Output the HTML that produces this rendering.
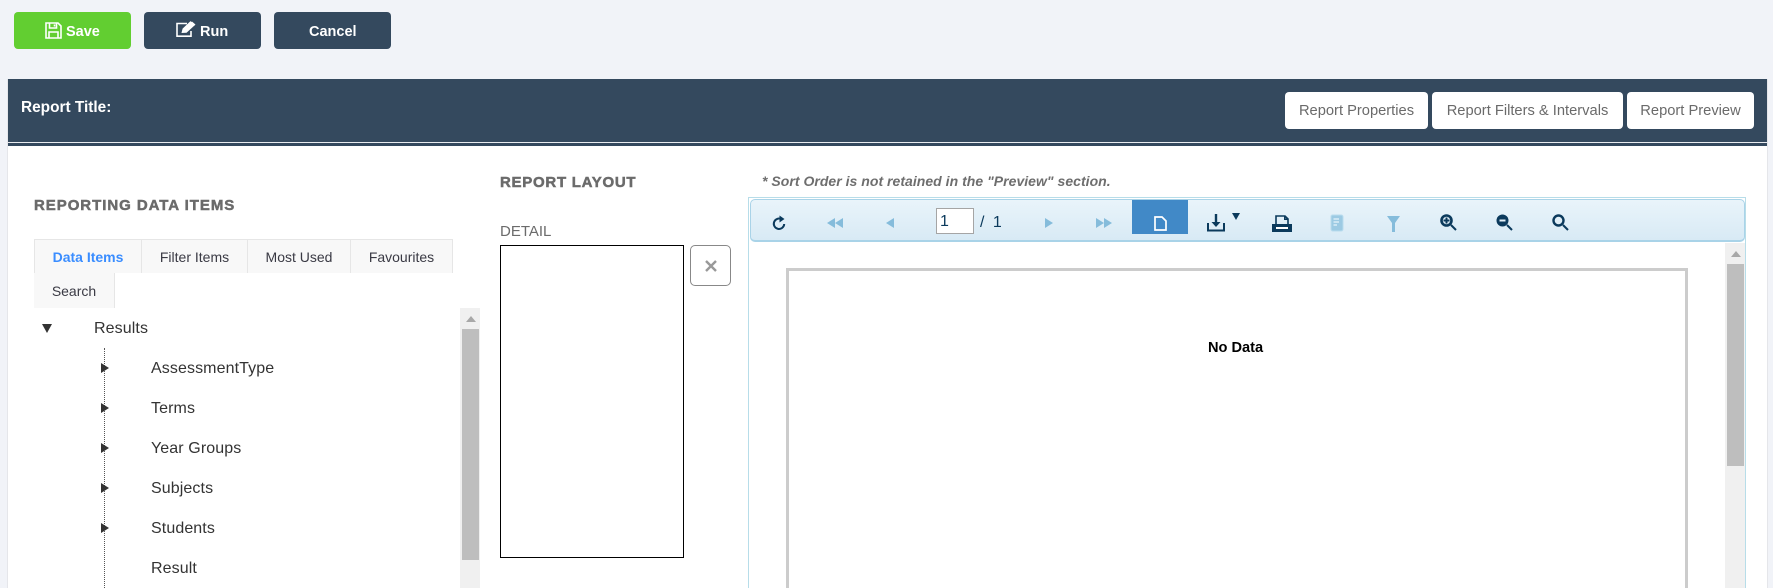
<!DOCTYPE html>
<html><head><meta charset="utf-8"><style>
html,body{margin:0;padding:0;width:1773px;height:588px;overflow:hidden;background:#f1f3f8;font-family:"Liberation Sans",sans-serif}
.a,.t{position:absolute}
.t{white-space:nowrap;line-height:20px}
.btn{position:absolute;top:12px;width:117px;height:37px;border-radius:4px;background:#34495e}
.w{color:#fff;font-weight:bold;font-size:14px}
.hb{position:absolute;top:92px;height:37px;background:#fff;border-radius:4px;color:#6a6a6a;font-size:14.7px;line-height:39px;text-align:center}
.tab{position:absolute;box-sizing:border-box;background:#f8f8f8;border:1px solid #e6e6e6;border-bottom:0;border-left:0;font-size:14px;line-height:34px;text-align:center;color:#3a3a44}
.tr{font-size:16px;color:#333;left:151px;letter-spacing:.1px}
.tri{position:absolute;left:101px;width:0;height:0;border-left:8px solid #333;border-top:5px solid transparent;border-bottom:5px solid transparent}
svg{position:absolute;overflow:visible}
</style></head><body>
<div class="btn" style="left:14px;background:#62ce31"></div>
<svg style="left:45px;top:22px" width="17" height="17" viewBox="0 0 17 17" fill="none" stroke="#fff" stroke-width="1.6"><path d="M1 1H13L16 4V16H1Z"/><path d="M4.5 1V6H11.5V1M9.5 2.5V4.5M4 16V10H13V16"/></svg>
<div class="t w" style="left:66px;top:22px;font-size:14.5px">Save</div>
<div class="btn" style="left:144px"></div>
<svg style="left:176px;top:21px" width="20" height="17" viewBox="0 0 20 17" fill="none" stroke="#fff" stroke-width="1.6"><path d="M15 10V15.2H1V2.5H11"/><path d="M6.5 11.2L7.3 8L14.5 1.2L17.8 4L10.2 11Z" fill="#fff"/><path d="M15.5 1L19 4" stroke-width="1.4"/></svg>
<div class="t w" style="left:200px;top:22px;font-size:14.5px">Run</div>
<div class="btn" style="left:274px"></div>
<div class="t w" style="left:309px;top:22px;font-size:14.5px">Cancel</div>

<div class="a" style="left:7px;top:79px;width:1761px;height:509px;background:#fff;border-left:1px solid #e5e6ea;border-right:1px solid #e5e6ea;box-sizing:border-box"></div>
<div class="a" style="left:8px;top:79px;width:1759px;height:63px;background:#34495e"></div>
<div class="a" style="left:8px;top:142px;width:1759px;height:1px;background:#e8ebef"></div>
<div class="a" style="left:8px;top:143px;width:1759px;height:3px;background:#34495e"></div>
<div class="t w" style="left:21px;top:98px;font-size:15.4px">Report Title:</div>
<div class="hb" style="left:1285px;width:143px">Report Properties</div>
<div class="hb" style="left:1432px;width:191px">Report Filters &amp; Intervals</div>
<div class="hb" style="left:1627px;width:127px">Report Preview</div>

<div class="t" style="left:34px;top:196px;font-size:15px;font-weight:bold;color:#6b6b6b;letter-spacing:.95px;-webkit-text-stroke:.5px #6b6b6b">REPORTING DATA ITEMS</div>
<div class="tab" style="left:34px;top:239px;width:108px;height:34px;border-left:1px solid #e6e6e6;color:#3a8dff;font-weight:bold">Data Items</div>
<div class="tab" style="left:142px;top:239px;width:106px;height:34px">Filter Items</div>
<div class="tab" style="left:248px;top:239px;width:103px;height:34px">Most Used</div>
<div class="tab" style="left:351px;top:239px;width:102px;height:34px">Favourites</div>
<div class="tab" style="left:34px;top:273px;width:81px;height:35px;border-top:0;line-height:36px">Search</div>

<div class="a" style="left:460px;top:308px;width:20px;height:280px;background:#f0f0f0"></div>
<div class="a" style="left:462px;top:329px;width:17px;height:231px;background:#bebebe"></div>
<div class="a" style="left:466px;top:316px;width:0;height:0;border-left:5px solid transparent;border-right:5px solid transparent;border-bottom:6px solid #a8a8a8"></div>

<div class="a" style="left:42px;top:324px;width:0;height:0;border-left:5px solid transparent;border-right:5px solid transparent;border-top:9px solid #333"></div>
<div class="t" style="left:94px;top:319px;font-size:16px;color:#333;letter-spacing:.1px">Results</div>
<div class="a" style="left:104px;top:348px;width:0;height:240px;border-left:1px dotted #555"></div>
<div class="tri" style="top:363px"></div><div class="tri" style="top:403px"></div><div class="tri" style="top:443px"></div><div class="tri" style="top:483px"></div><div class="tri" style="top:523px"></div>
<div class="t tr" style="top:359px">AssessmentType</div>
<div class="t tr" style="top:399px">Terms</div>
<div class="t tr" style="top:439px">Year Groups</div>
<div class="t tr" style="top:479px">Subjects</div>
<div class="t tr" style="top:519px">Students</div>
<div class="t tr" style="top:559px">Result</div>

<div class="t" style="left:500px;top:173px;font-size:15px;font-weight:bold;color:#6b6b6b;letter-spacing:.72px;-webkit-text-stroke:.5px #6b6b6b">REPORT LAYOUT</div>
<div class="t" style="left:500px;top:222px;font-size:15px;color:#6b6b6b">DETAIL</div>
<div class="a" style="left:500px;top:245px;width:184px;height:313px;border:1px solid #000;box-sizing:border-box"></div>
<div class="a" style="left:690px;top:245px;width:41px;height:41px;border:1px solid #888;border-radius:5px;box-sizing:border-box"></div>
<svg style="left:705px;top:260px" width="12" height="12" viewBox="0 0 12 12"><path d="M1 1L11 11M11 1L1 11" stroke="#999" stroke-width="2.4"/></svg>
<div class="t" style="left:762px;top:171px;font-size:14px;font-style:italic;font-weight:bold;color:#6e6e6e;letter-spacing:.03px">* Sort Order is not retained in the "Preview" section.</div>

<div class="a" style="left:748px;top:197px;width:998px;height:391px;border:1px solid #b7dde9;border-bottom:0;box-sizing:border-box"></div>
<div class="a" style="left:750px;top:199px;width:995px;height:43px;box-sizing:border-box;border:1px solid #a9d3e8;border-bottom-width:2px;border-radius:5px;background:linear-gradient(#e9f4fa,#d8eaf5)"></div>
<div class="a" style="left:1132px;top:200px;width:56px;height:34px;background:#4189c7"></div>

<svg style="left:772px;top:215px" width="14" height="16" viewBox="0 0 14 16" fill="none"><path d="M9.5 4.2A5.2 5.2 0 1 0 12.2 9" stroke="#0b3a5c" stroke-width="2"/><path d="M7.5 0.5L12.5 4L7.5 7.5Z" fill="#0b3a5c"/></svg>
<svg style="left:827px;top:218px" width="16" height="10" viewBox="0 0 16 10" fill="#85bcdb"><path d="M0 5L8 0V10ZM8 5L16 0V10Z"/></svg>
<svg style="left:886px;top:218px" width="9" height="10" viewBox="0 0 9 10" fill="#85bcdb"><path d="M0 5L8 0V10Z"/></svg>
<input class="a" value="1" style="left:936px;top:208px;width:38px;height:26px;box-sizing:border-box;border:1px solid #a5a5a5;padding:2px 0 0 3px;font:16px 'Liberation Sans',sans-serif;color:#0b3a5c;background:#fff;outline:0">
<div class="t" style="left:980px;top:213px;font-size:16px;color:#0b3a5c;letter-spacing:2px">/&nbsp;1</div>
<svg style="left:1044px;top:218px" width="9" height="10" viewBox="0 0 9 10" fill="#85bcdb"><path d="M9 5L1 0V10Z"/></svg>
<svg style="left:1096px;top:218px" width="16" height="10" viewBox="0 0 16 10" fill="#85bcdb"><path d="M16 5L8 0V10ZM8 5L0 0V10Z"/></svg>
<svg style="left:1154px;top:216px" width="13" height="15" viewBox="0 0 13 15" fill="none"><path d="M1 1H8L12 5V14H1Z" stroke="#fff" stroke-width="1.7"/></svg>
<svg style="left:1207px;top:214px" width="18" height="18" viewBox="0 0 18 18" fill="none"><path d="M1 9V16.5H17V9" stroke="#0b3a5c" stroke-width="2"/><path d="M9 0V9" stroke="#0b3a5c" stroke-width="2.4"/><path d="M4.5 8H13.5L9 13Z" fill="#0b3a5c"/></svg>
<svg style="left:1232px;top:213px" width="8" height="7" viewBox="0 0 8 7" fill="#0b3a5c"><path d="M0 0H8L4 7Z"/></svg>
<svg style="left:1272px;top:215px" width="20" height="17" viewBox="0 0 20 17"><path d="M4 9V1H13L16 4V9" fill="none" stroke="#0b3a5c" stroke-width="1.6"/><path d="M0 9H20V17H0Z" fill="#0b3a5c"/><path d="M4 12H16V14H4Z" fill="#fff"/><path d="M12 1H13.5V3.5H16V5H12Z" fill="#0b3a5c"/></svg>
<svg style="left:1330px;top:214px" width="14" height="18" viewBox="0 0 14 18"><path d="M2 1H11Q13 1 13 3V15Q13 17 11 17H3Q1 17 1 15V2Z" fill="#9ccae3" stroke="#b9dcee"/><path d="M3.5 5H9M3.5 8H9M3.5 11H7" stroke="#e6f3fa" stroke-width="1.2"/></svg>
<svg style="left:1387px;top:216px" width="13" height="16" viewBox="0 0 13 16" fill="#85bcdb"><path d="M0 0H13L8 7V16H5V7Z"/></svg>
<svg style="left:1440px;top:214px" width="17" height="17" viewBox="0 0 17 17" fill="none"><circle cx="6.5" cy="6.5" r="5" stroke="#0b3a5c" stroke-width="2.6"/><path d="M11 11L16 16" stroke="#0b3a5c" stroke-width="2"/><path d="M6.5 3.5V9.5M3.5 6.5H9.5" stroke="#0b3a5c" stroke-width="2"/></svg>
<svg style="left:1496px;top:214px" width="17" height="17" viewBox="0 0 17 17" fill="none"><circle cx="6.5" cy="6.5" r="6" fill="#0b3a5c"/><path d="M3.5 6.5H9.5" stroke="#e3f0f8" stroke-width="2"/><path d="M11 11L16 16" stroke="#0b3a5c" stroke-width="2"/></svg>
<svg style="left:1552px;top:214px" width="17" height="17" viewBox="0 0 17 17" fill="none"><circle cx="6.5" cy="6.5" r="5" stroke="#0b3a5c" stroke-width="2.4"/><path d="M11 11L16 16" stroke="#0b3a5c" stroke-width="2"/></svg>

<div class="a" style="left:786px;top:268px;width:902px;height:320px;box-sizing:border-box;border:3px solid #ccc;border-bottom:0"></div>
<div class="t" style="left:1208px;top:338px;font-size:14.6px;font-weight:bold;color:#000">No Data</div>
<div class="a" style="left:1725px;top:243px;width:20px;height:345px;background:#f0f0f0"></div>
<div class="a" style="left:1727px;top:264px;width:17px;height:202px;background:#bebebe"></div>
<div class="a" style="left:1731px;top:251px;width:0;height:0;border-left:5px solid transparent;border-right:5px solid transparent;border-bottom:6px solid #a8a8a8"></div>
</body></html>
